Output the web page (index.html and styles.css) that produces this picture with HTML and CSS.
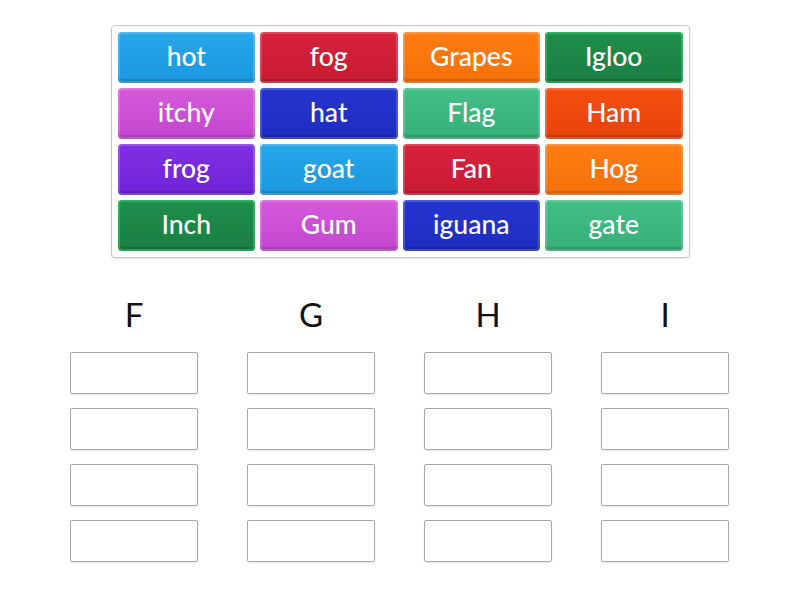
FILE: index.html
```html
<!DOCTYPE html>
<html>
<head>
<meta charset="utf-8">
<link rel="stylesheet" href="styles.css">
</head>
<body>
<div class="page">
  <div class="bank">
    <div class="tile blue">hot</div>
    <div class="tile red">fog</div>
    <div class="tile orange">Grapes</div>
    <div class="tile green">Igloo</div>
    <div class="tile magenta">itchy</div>
    <div class="tile navy">hat</div>
    <div class="tile mint">Flag</div>
    <div class="tile redorange">Ham</div>
    <div class="tile purple">frog</div>
    <div class="tile blue">goat</div>
    <div class="tile red">Fan</div>
    <div class="tile orange">Hog</div>
    <div class="tile green">Inch</div>
    <div class="tile magenta">Gum</div>
    <div class="tile navy">iguana</div>
    <div class="tile mint">gate</div>
  </div>
  <div class="groups">
    <div class="group">
      <div class="head">F</div>
      <div class="slot"></div><div class="slot"></div><div class="slot"></div><div class="slot"></div>
    </div>
    <div class="group">
      <div class="head">G</div>
      <div class="slot"></div><div class="slot"></div><div class="slot"></div><div class="slot"></div>
    </div>
    <div class="group">
      <div class="head">H</div>
      <div class="slot"></div><div class="slot"></div><div class="slot"></div><div class="slot"></div>
    </div>
    <div class="group">
      <div class="head">I</div>
      <div class="slot"></div><div class="slot"></div><div class="slot"></div><div class="slot"></div>
    </div>
  </div>
</div>
</body>
</html>
```

FILE: styles.css
```css
html, body {
  margin: 0;
  padding: 0;
  background: #fff;
}
body {
  font-family: Lato, "Open Sans", sans-serif;
}
.page {
  width: 800px;
  height: 600px;
  display: flex;
  flex-direction: column;
  align-items: center;
}
.bank {
  margin-top: 25px;
  width: 565px;
  padding: 6px;
  border: 1px solid #c8c8c8;
  border-radius: 4px;
  box-shadow: 0 1px 2px rgba(0,0,0,0.12);
  display: grid;
  grid-template-columns: repeat(4, 1fr);
  grid-auto-rows: 51px;
  gap: 5px;
}
.tile {
  display: flex;
  align-items: center;
  justify-content: center;
  color: #fff;
  font-size: 26.5px;
  font-weight: 500;
  border-radius: 4px;
  padding-bottom: 4px;
  box-sizing: border-box;
  box-shadow: inset 0 0 0 2px rgba(255,255,255,0.18), inset 0 -4px 0 rgba(0,0,0,0.14);
}
.blue { background: linear-gradient(#27a6ea, #1b98e0); }
.red { background: linear-gradient(#d8223c, #c81a33); }
.orange { background: linear-gradient(#ff7d12, #f5700a); }
.green { background: linear-gradient(#1f8e4c, #1a7f43); box-shadow: inset 0 0 0 2px rgba(60,220,120,0.45), inset 0 -4px 0 rgba(0,0,0,0.14); }
.magenta { background: linear-gradient(#d45ad9, #c445d0); }
.navy { background: linear-gradient(#2435cf, #1e2cc2); }
.mint { background: linear-gradient(#42be88, #36b07a); }
.redorange { background: linear-gradient(#f44e10, #e8430a); }
.purple { background: linear-gradient(#8030e4, #6f22d8); }

.groups {
  margin-top: 39px;
  display: flex;
  gap: 49px;
  margin-left: -1px;
}
.group {
  width: 128px;
  display: flex;
  flex-direction: column;
  gap: 14px;
}
.head {
  text-align: center;
  font-size: 33px;
  font-weight: 400;
  color: #111;
  height: 36px;
  line-height: 34px;
  margin-bottom: 5px;
}
.slot {
  height: 42px;
  box-sizing: border-box;
  border: 1px solid #a8a8a8;
  border-radius: 2px;
  box-shadow: 0 1px 2px rgba(0,0,0,0.08);
}
```
